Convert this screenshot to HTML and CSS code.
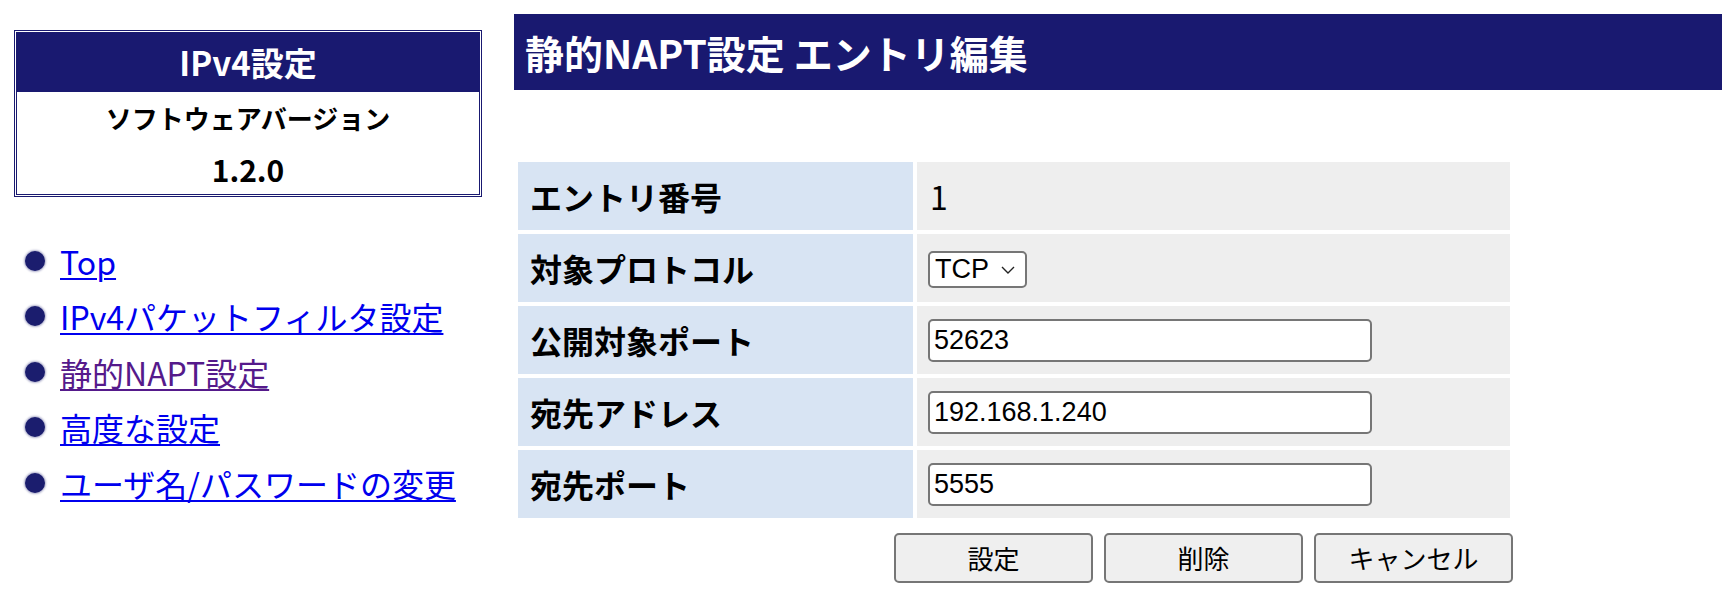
FILE: index.html
```html
<!DOCTYPE html>
<html lang="ja">
<head>
<meta charset="utf-8">
<title>静的NAPT設定 エントリ編集</title>
<link rel="stylesheet" href="styles.css">
</head>
<body>
<div class="page">
  <aside class="sidebar">
    <div class="verbox">
      <div class="verbox-title">IPv4設定</div>
      <div class="verbox-row">ソフトウェアバージョン</div>
      <div class="verbox-row ver">1.2.0</div>
    </div>
    <ul class="nav">
      <li><a href="#">Top</a></li>
      <li><a href="#">IPv4パケットフィルタ設定</a></li>
      <li><a href="#" class="visited">静的NAPT設定</a></li>
      <li><a href="#">高度な設定</a></li>
      <li><a href="#">ユーザ名/パスワードの変更</a></li>
    </ul>
  </aside>
  <main class="main">
    <h1 class="title">静的NAPT設定 エントリ編集</h1>
    <table class="form">
      <tr>
        <th class="label">エントリ番号</th>
        <td class="value"><span class="num">1</span></td>
      </tr>
      <tr>
        <th class="label">対象プロトコル</th>
        <td class="value">
          <span class="select-wrap">
            <select class="select"><option>TCP</option><option>UDP</option></select>
            <svg class="chev" width="14" height="8" viewBox="0 0 14 8"><path d="M1 1 L7 7 L13 1" fill="none" stroke="#222" stroke-width="1.4"/></svg>
          </span>
        </td>
      </tr>
      <tr>
        <th class="label">公開対象ポート</th>
        <td class="value"><input class="field" type="text" value="52623"></td>
      </tr>
      <tr>
        <th class="label">宛先アドレス</th>
        <td class="value"><input class="field" type="text" value="192.168.1.240"></td>
      </tr>
      <tr>
        <th class="label">宛先ポート</th>
        <td class="value"><input class="field" type="text" value="5555"></td>
      </tr>
    </table>
    <div class="actions">
      <button class="btn" type="button">設定</button>
      <button class="btn" type="button">削除</button>
      <button class="btn" type="button">キャンセル</button>
    </div>
  </main>
</div>
</body>
</html>
```

FILE: styles.css
```css
html, body {
  margin: 0;
  background: #ffffff;
}
body {
  font-family: "Noto Sans CJK JP", "Noto Sans", sans-serif;
  color: #000;
}
.page {
  display: flex;
  gap: 32px;
  padding: 14px 6px 0 14px;
}
.sidebar {
  width: 468px;
  flex: none;
  padding-top: 16px;
}
.verbox {
  box-sizing: border-box;
  width: 468px;
  border: 3px double #191970;
}
.verbox-title {
  background: #191970;
  color: #fff;
  font-weight: 700;
  font-size: 33px;
  line-height: 1;
  height: 59px;
  display: flex;
  align-items: center;
  justify-content: center;
}
.verbox-row {
  height: 51px;
  display: flex;
  align-items: center;
  justify-content: center;
  font-weight: 700;
  font-size: 26px;
  line-height: 1;
}
.verbox-row.ver {
  font-size: 30px;
}
.nav {
  list-style: none;
  margin: 36px 0 0;
  padding: 0;
}
.nav li {
  display: flex;
  align-items: center;
  height: 55.5px;
  font-size: 32px;
  line-height: 1;
}
.nav li::before {
  content: "";
  width: 20px;
  height: 20px;
  border-radius: 50%;
  background: #1b1d6e;
  box-shadow: 0 0 2px 1px rgba(27, 29, 110, 0.35);
  margin-left: 11px;
  margin-right: 15px;
  flex: none;
}
.nav a {
  color: #0000ee;
  text-decoration: underline;
  text-underline-offset: 3px;
  text-decoration-thickness: 2px;
}
.nav a.visited {
  color: #551a8b;
}
.main {
  flex: 1;
  min-width: 0;
}
.title {
  margin: 0;
  box-sizing: border-box;
  height: 76px;
  background: #191970;
  color: #fff;
  font-size: 39px;
  font-weight: 700;
  line-height: 1;
  display: flex;
  align-items: center;
  padding-left: 11px;
}
.form {
  margin-top: 68px;
  width: 1000px;
  border-spacing: 4px;
  table-layout: fixed;
}
.form tr {
  height: 68px;
}
.label {
  box-sizing: border-box;
  width: 395px;
  background: #d8e4f3;
  text-align: left;
  font-weight: 700;
  font-size: 32px;
  line-height: 1;
  padding: 0 12px;
}
.value {
  background: #eeeeee;
  padding: 0 11px;
  font-size: 32px;
  line-height: 1;
}
.num {
  font-weight: 400;
  padding-left: 2px;
}
.field {
  box-sizing: border-box;
  width: 444px;
  height: 43px;
  border: 2px solid #767676;
  border-radius: 5px;
  background: #fff;
  font-family: "Liberation Sans", Arial, sans-serif;
  font-size: 27px;
  color: #000;
  padding: 0 4px;
  vertical-align: middle;
}
.select-wrap {
  position: relative;
  display: inline-block;
  vertical-align: middle;
}
.select {
  box-sizing: border-box;
  width: 99px;
  height: 37px;
  border: 2px solid #767676;
  border-radius: 5px;
  background: #fff;
  font-family: "Liberation Sans", Arial, sans-serif;
  font-size: 27px;
  color: #000;
  padding: 0 0 0 5px;
  -webkit-appearance: none;
  appearance: none;
  display: block;
}
.chev {
  position: absolute;
  right: 12px;
  top: 15px;
  pointer-events: none;
}
.actions {
  width: 1000px;
  box-sizing: border-box;
  display: flex;
  justify-content: flex-end;
  gap: 11px;
  margin-top: 11px;
  padding-right: 1px;
}
.btn {
  box-sizing: border-box;
  width: 199px;
  height: 50px;
  background: #efefef;
  border: 2px solid #767676;
  border-radius: 5px;
  font-family: "Noto Sans CJK JP", sans-serif;
  font-size: 26px;
  line-height: 1;
  color: #000;
  padding: 0;
}
```
